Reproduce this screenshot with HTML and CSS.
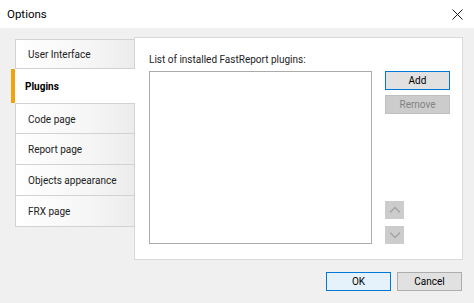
FILE: index.html
```html
<!DOCTYPE html>
<html>
<head>
<meta charset="utf-8">
<link rel="stylesheet" href="styles.css">
</head>
<body>
<div class="dialog">
  <div class="titlebar">
    <span class="title">Options</span>
    <svg class="close" width="11" height="11" viewBox="0 0 11 11"><path d="M0.5 0.5 L10.5 10.5 M10.5 0.5 L0.5 10.5" stroke="#1a1a1a" stroke-width="1" fill="none"/></svg>
  </div>
  <div class="main">
    <div class="tabs">
      <div class="tab first">User Interface</div>
      <div class="tab selected">Plugins</div>
      <div class="tab">Code page</div>
      <div class="tab">Report page</div>
      <div class="tab">Objects appearance</div>
      <div class="tab">FRX page</div>
    </div>
    <div class="panel">
      <div class="label">List of installed FastReport plugins:</div>
      <div class="panel-body">
        <div class="listbox"></div>
        <div class="side">
          <div class="btn primary">Add</div>
          <div class="btn disabled">Remove</div>
          <div class="spacer"></div>
          <div class="arrow"><svg width="12" height="8" viewBox="0 0 12 8"><path d="M1 6.5 L6 1.5 L11 6.5" stroke="#a3a3a3" stroke-width="1.3" fill="none"/></svg></div>
          <div class="arrow"><svg width="12" height="8" viewBox="0 0 12 8"><path d="M1 1.5 L6 6.5 L11 1.5" stroke="#a3a3a3" stroke-width="1.3" fill="none"/></svg></div>
        </div>
      </div>
    </div>
  </div>
  <div class="footer">
    <div class="btn ok">OK</div>
    <div class="btn cancel">Cancel</div>
  </div>
</div>
</body>
</html>
```
FILE: styles.css
```css
html, body {
  margin: 0;
  padding: 0;
}
body {
  width: 474px;
  height: 303px;
  overflow: hidden;
  background: #f0f0f0;
  font-family: Roboto, "Noto Sans", sans-serif;
  font-size: 10px;
  color: #222;
}
.dialog {
  display: flex;
  flex-direction: column;
  height: 303px;
}
.titlebar {
  height: 28px;
  background: #ffffff;
  display: flex;
  align-items: center;
  justify-content: space-between;
  padding: 0 11px 0 7px;
}
.title {
  font-size: 11.5px;
  color: #000;
}
.close {
  display: block;
}
.main {
  display: flex;
  padding: 9px 0 0 11px;
}
.tabs {
  width: 124px;
  margin-top: 2px;
  display: flex;
  flex-direction: column;
  position: relative;
  z-index: 1;
}
.tab {
  margin-left: 4px;
  height: 31px;
  box-sizing: border-box;
  border: 1px solid #d2d2d2;
  border-top: none;
  background: linear-gradient(to right, #ffffff 0%, #f6f6f6 60%, #ececec 100%);
  padding: 1px 0 0 12px;
  display: flex;
  align-items: center;
  color: #222;
}
.tab.first {
  height: 30px;
  border-top: 1px solid #d2d2d2;
}
.tab.selected {
  margin-left: 0;
  height: 34px;
  background: #ffffff;
  border: none;
  border-left: 4px solid #f0a30a;
  padding-left: 10px;
  font-weight: bold;
  color: #000;
}
.tab.selected + .tab {
  border-top: 1px solid #d2d2d2;
}
.panel {
  margin-left: -1px;
  width: 329px;
  height: 223px;
  box-sizing: border-box;
  background: #ffffff;
  border: 1px solid #d9d9d9;
  padding: 14px 12px 15px 14px;
  display: flex;
  flex-direction: column;
}
.label {
  height: 19px;
  line-height: 15px;
}
.panel-body {
  display: flex;
  flex: 1;
}
.listbox {
  width: 223px;
  box-sizing: border-box;
  border: 1px solid #ababab;
  background: #fff;
}
.side {
  margin-left: 13px;
  display: flex;
  flex-direction: column;
  width: 65px;
}
.btn {
  height: 19px;
  box-sizing: border-box;
  display: flex;
  align-items: center;
  justify-content: center;
  font-size: 10px;
}
.primary {
  border: 1px solid #0078d7;
  background: #e1e1e1;
  color: #000;
}
.disabled {
  margin-top: 5px;
  border: 1px solid #bfbfbf;
  background: #cccccc;
  color: #838383;
}
.spacer {
  flex: 1;
}
.arrow {
  width: 19px;
  height: 18px;
  background: #cccccc;
  display: flex;
  align-items: center;
  justify-content: center;
}
.arrow + .arrow {
  margin-top: 7px;
}
.footer {
  display: flex;
  justify-content: flex-end;
  padding: 12px 12px 0 0;
  gap: 6px;
}
.ok, .cancel {
  width: 65px;
}
.ok {
  border: 1px solid #0078d7;
  background: #e5f1fb;
  color: #000;
}
.cancel {
  border: 1px solid #adadad;
  background: #e1e1e1;
  color: #000;
}
```
